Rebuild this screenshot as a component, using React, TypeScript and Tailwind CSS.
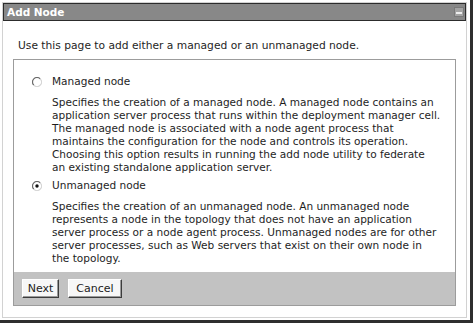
import React from "react";

function Radio({ checked }: { checked?: boolean }) {
  return (
    <svg width="10" height="10" viewBox="0 0 10 10" className="shrink-0">
      <circle cx="5" cy="5" r="4.5" fill="#ffffff" />
      <path d="M8.2 1.8 A4.5 4.5 0 0 0 1.8 8.2" fill="none" stroke="#6a6a6a" strokeWidth="1.2" />
      <path d="M1.8 8.2 A4.5 4.5 0 0 0 8.2 1.8" fill="none" stroke="#d4d4d4" strokeWidth="1.2" />
      {checked && <circle cx="5" cy="5" r="1.7" fill="#111" />}
    </svg>
  );
}

function Button({ label, w }: { label: string; w: string }) {
  return (
    <div
      className={`${w} h-[19px] flex items-center justify-center bg-[#f7f7f7] border border-t-[#ffffff] border-l-[#ffffff] border-r-[#3c3c3c] border-b-[#3c3c3c] shadow-[inset_-1px_-1px_0_#9a9a9a] text-[11px] text-[#222] leading-none`}
    >
      {label}
    </div>
  );
}

export default function App() {
  const managed = [
    "Specifies the creation of a managed node. A managed node contains an",
    "application server process that runs within the deployment manager cell.",
    "The managed node is associated with a node agent process that",
    "maintains the configuration for the node and controls its operation.",
    "Choosing this option results in running the add node utility to federate",
    "an existing standalone application server.",
  ];
  const unmanaged = [
    "Specifies the creation of an unmanaged node. An unmanaged node",
    "represents a node in the topology that does not have an application",
    "server process or a node agent process. Unmanaged nodes are for other",
    "server processes, such as Web servers that exist on their own node in",
    "the topology.",
  ];
  return (
    <div className="w-[474px] h-[324px] bg-white overflow-hidden font-['DejaVu_Sans',sans-serif] text-[#1e1e1e]">
      <div className="w-[473px] h-[323px] border-r-[3px] border-b-[3px] border-[#2e2e2e] pt-[2px] pl-[2px]">
        <div className="w-[465px] h-[316px] border border-[#d2d2d2] flex flex-col">
          <div className="h-[18px] bg-[#888888] border border-[#2c2c2c] flex items-center justify-between pl-[3px] pr-[1px]">
            <span className="text-white font-bold text-[10.5px] leading-none">Add Node</span>
            <div className="w-[10px] h-[10px] bg-[#a4a4a4] border border-[#7a7a7a] flex items-end justify-center pb-[2px]">
              <div className="w-[6px] h-[2px] bg-[#eeeeee]" />
            </div>
          </div>
          <div className="mt-[18px] ml-[15px] text-[10.7px] leading-[13px] whitespace-nowrap">
            Use this page to add either a managed or an unmanaged node.
          </div>
          <div className="mt-[7px] ml-[10px] w-[443px] h-[247px] border border-[#9c9c9c] flex flex-col">
            <div className="flex-1 text-[10.55px] leading-[13px] whitespace-nowrap">
              <div className="mt-[15px] flex items-center h-[13px] pl-[18px]">
                <Radio />
                <span className="ml-[10px]">Managed node</span>
              </div>
              <div className="mt-[8px] pl-[38px]">
                {managed.map((l, i) => (
                  <div key={i}>{l}</div>
                ))}
              </div>
              <div className="mt-[5px] flex items-center h-[13px] pl-[18px]">
                <Radio checked />
                <span className="ml-[10px]">Unmanaged node</span>
              </div>
              <div className="mt-[8px] pl-[38px]">
                {unmanaged.map((l, i) => (
                  <div key={i}>{l}</div>
                ))}
              </div>
            </div>
            <div className="h-[33px] bg-[#c2c2c2] flex items-start pt-[7px] pl-[8px] gap-[9px]">
              <Button label="Next" w="w-[37px]" />
              <Button label="Cancel" w="w-[54px]" />
            </div>
          </div>
        </div>
      </div>
    </div>
  );
}
